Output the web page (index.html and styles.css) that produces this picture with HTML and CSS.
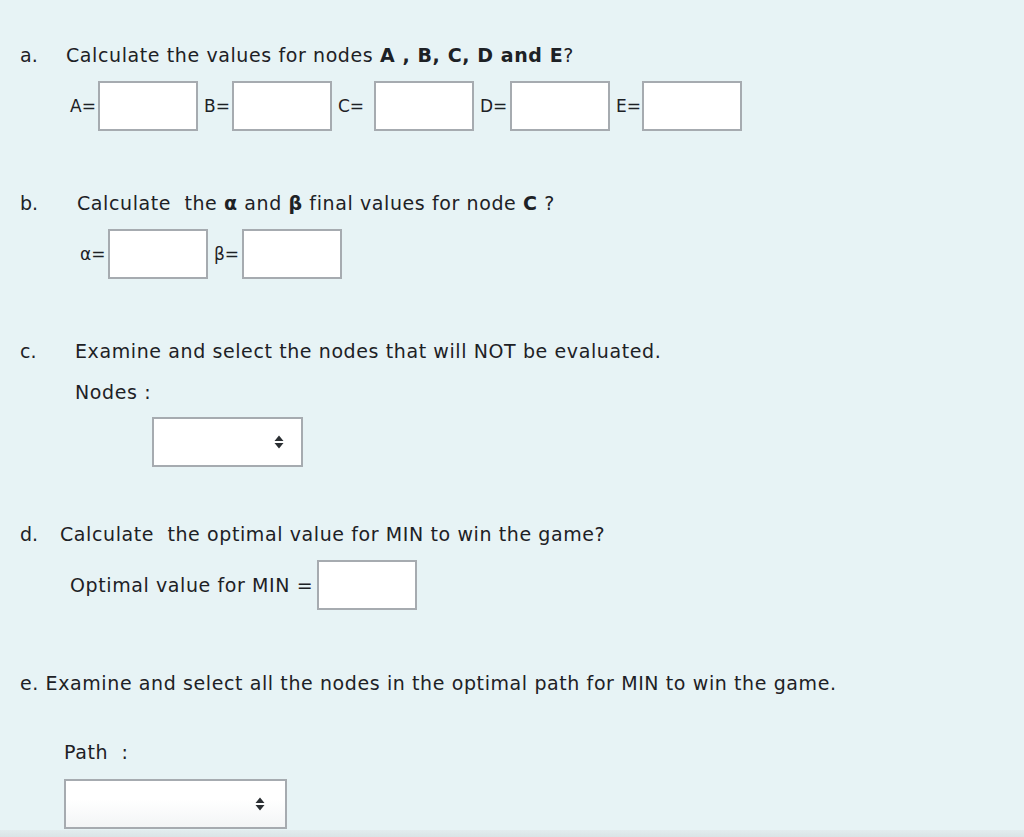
FILE: index.html
```html
<!DOCTYPE html>
<html>
<head>
<meta charset="utf-8">
<link rel="stylesheet" href="styles.css">
</head>
<body>
<div class="page">
  <div class="q q-a">
    <div class="line"><span class="num num-a">a.</span><span>Calculate the values for nodes <b>A , B, C, D and E</b>?</span></div>
    <div class="row row-a">
      <label class="lbl">A=</label><input class="box" type="text">
      <label class="lbl">B=</label><input class="box" type="text">
      <label class="lbl">C=</label><input class="box" type="text">
      <label class="lbl">D=</label><input class="box" type="text">
      <label class="lbl">E=</label><input class="box" type="text">
    </div>
  </div>

  <div class="q q-b">
    <div class="line"><span class="num num-b">b.</span><span>Calculate&nbsp; the <b>α</b> and <b>β</b> final values for node <b>C</b> ?</span></div>
    <div class="row row-b">
      <label class="lbl">α=</label><input class="box" type="text">
      <label class="lbl">β=</label><input class="box" type="text">
    </div>
  </div>

  <div class="q q-c">
    <div class="line"><span class="num num-c">c.</span><span>Examine and select the nodes that will NOT be evaluated.</span></div>
    <div class="line sub sub-c"><span>Nodes :</span></div>
    <div class="sel sel-c">
      <svg class="arrows" width="10" height="14" viewBox="0 0 10 14"><path d="M5 0.5 L9.5 6 L0.5 6 Z M0.5 8 L9.5 8 L5 13.5 Z" fill="#2b2f33"/></svg>
    </div>
  </div>

  <div class="q q-d">
    <div class="line"><span class="num num-d">d.</span><span>Calculate&nbsp; the optimal value for MIN to win the game?</span></div>
    <div class="row row-d">
      <span class="lbl-d">Optimal value for MIN =</span><input class="box" type="text">
    </div>
  </div>

  <div class="q q-e">
    <div class="line"><span>e. Examine and select all the nodes in the optimal path for MIN to win the game.</span></div>
    <div class="line sub sub-e"><span>Path&nbsp; :</span></div>
    <div class="sel sel-e">
      <svg class="arrows" width="10" height="14" viewBox="0 0 10 14"><path d="M5 0.5 L9.5 6 L0.5 6 Z M0.5 8 L9.5 8 L5 13.5 Z" fill="#2b2f33"/></svg>
    </div>
  </div>
  <div class="bottom-band"></div>
</div>
</body>
</html>
```

FILE: styles.css
```css
html, body {
  margin: 0;
  padding: 0;
}
body {
  background: #e7f3f5;
  color: #1d2125;
  font-family: "DejaVu Sans", "Open Sans", sans-serif;
  font-size: 19px;
  letter-spacing: 0.6px;
  height: 837px;
  overflow: hidden;
}
.page {
  padding-left: 20px;
  display: flex;
  flex-direction: column;
}
.q {
  display: flex;
  flex-direction: column;
}
.line {
  height: 24px;
  line-height: 24px;
  display: flex;
  white-space: nowrap;
}
b { font-weight: 600; }
.num { display: inline-block; letter-spacing: 0; }
.num-a { width: 46px; }
.num-b { width: 57px; }
.num-c { width: 55px; }
.num-d { width: 40px; }

.q-a { margin-top: 43px; }
.row {
  display: flex;
  align-items: center;
}
.row-a { margin-top: 14px; padding-left: 50px; }
.lbl {
  font-size: 17px;
  letter-spacing: 0;
  margin-right: 2px;
}
.row-a .lbl:nth-of-type(1) { width: 26px; }
.row-a .lbl:nth-of-type(2) { width: 26px; }
.row-a .lbl:nth-of-type(3) { width: 34px; }
.row-a .lbl:nth-of-type(4) { width: 28px; }
.row-a .lbl:nth-of-type(5) { width: 24px; }
.row-b .lbl { width: 26px; }
.box {
  width: 100px;
  height: 50px;
  box-sizing: border-box;
  border: 2px solid #a6abb0;
  background: #fff;
  margin: 0 6px 0 0;
  padding: 0;
  outline: none;
  font: inherit;
}
.q-b { margin-top: 60px; }
.row-b { margin-top: 14px; padding-left: 60px; }

.q-c { margin-top: 60px; }
.sub-c { margin-top: 17px; padding-left: 55px; }
.sel {
  height: 50px;
  box-sizing: border-box;
  border: 2px solid #a6abb0;
  background: #fff;
  display: flex;
  align-items: center;
  justify-content: flex-end;
}
.sel-c {
  margin-top: 13px;
  margin-left: 132px;
  width: 151px;
  padding-right: 17px;
}
.q-d { margin-top: 55px; }
.row-d { margin-top: 14px; padding-left: 50px; }
.lbl-d { margin-right: 4px; }

.q-e { margin-top: 61px; }
.sub-e { margin-top: 45px; padding-left: 44px; }
.sel-e {
  margin-top: 15px;
  margin-left: 44px;
  width: 223px;
  padding-right: 20px;
  background: linear-gradient(#ffffff 40%, #f3f5f6);
}
.arrows { display: block; }
.bottom-band {
  margin-left: -20px;
  margin-top: 1px;
  height: 8px;
  background: linear-gradient(#e2ecee, #d9e3e5);
}
```
